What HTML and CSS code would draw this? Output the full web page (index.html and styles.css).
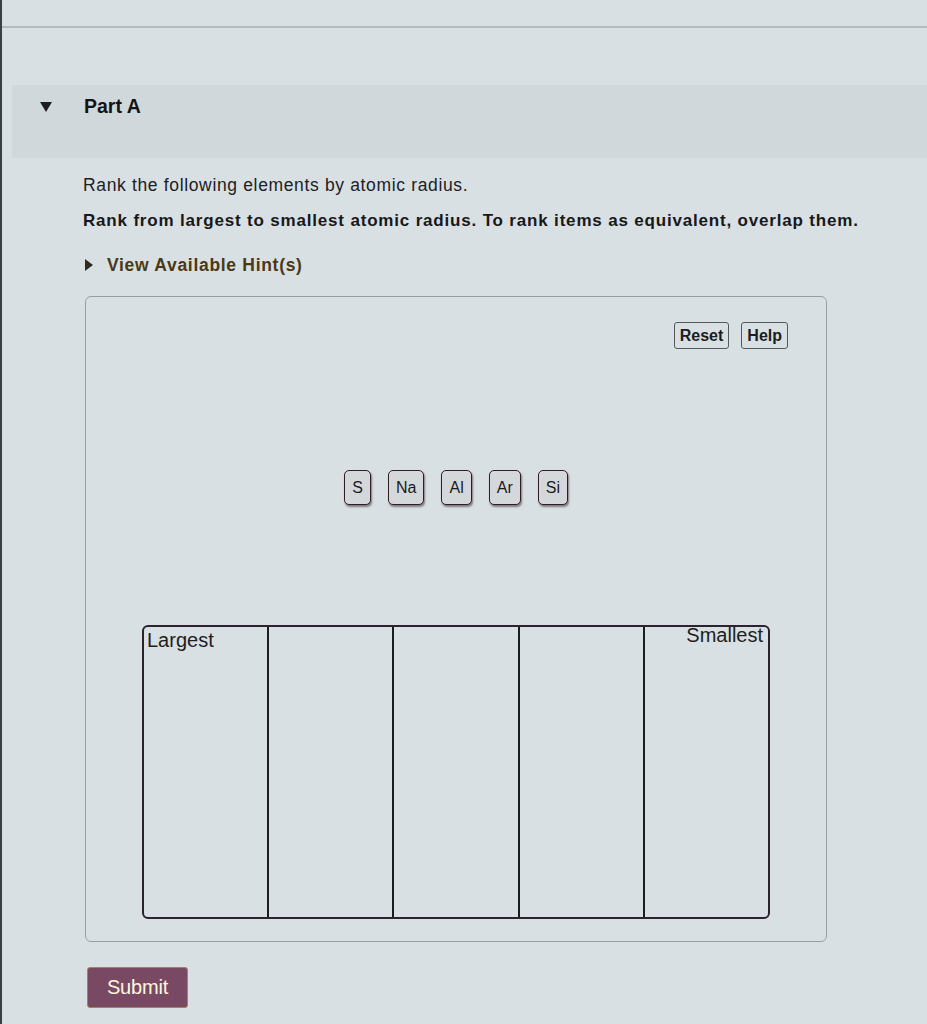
FILE: index.html
```html
<!DOCTYPE html>
<html>
<head>
<meta charset="utf-8">
<link rel="stylesheet" href="styles.css">
</head>
<body>
<div class="page">
  <div class="topbar"></div>
  <div class="part-header">
    <span class="caret-down"></span>
    <span class="part-title">Part A</span>
  </div>
  <div class="content">
    <p class="question">Rank the following elements by atomic radius.</p>
    <p class="instruction">Rank from largest to smallest atomic radius. To rank items as equivalent, overlap them.</p>
    <div class="hint"><span class="caret-right"></span><span class="hint-text">View Available Hint(s)</span></div>
    <div class="panel">
      <div class="tools">
        <button class="tool-btn">Reset</button>
        <button class="tool-btn">Help</button>
      </div>
      <div class="tiles">
        <div class="tile">S</div>
        <div class="tile">Na</div>
        <div class="tile">Al</div>
        <div class="tile">Ar</div>
        <div class="tile">Si</div>
      </div>
      <div class="ranking">
        <div class="slot"><span class="label-left">Largest</span></div>
        <div class="slot"></div>
        <div class="slot"></div>
        <div class="slot"></div>
        <div class="slot slot-last"><span class="label-right">Smallest</span></div>
      </div>
    </div>
    <button class="submit">Submit</button>
  </div>
</div>
</body>
</html>
```
FILE: styles.css
```css
html, body {
  margin: 0;
  padding: 0;
}
body {
  background: #d8e0e3;
  font-family: "Liberation Sans", Arial, sans-serif;
  color: #1c1c1e;
}
.page {
  width: 927px;
  height: 1024px;
  overflow: hidden;
  border-left: 2px solid #3c4044;
  box-sizing: border-box;
}
.topbar {
  height: 26px;
  border-bottom: 2px solid #b3bbc0;
}
.part-header {
  margin-top: 57px;
  margin-left: 10px;
  height: 73px;
  background: #d1d8dc;
  display: flex;
  align-items: flex-start;
  padding-top: 10px;
  box-sizing: border-box;
}
.caret-down {
  width: 0;
  height: 0;
  border-left: 6px solid transparent;
  border-right: 6px solid transparent;
  border-top: 10px solid #1e1e22;
  margin-left: 28px;
  margin-top: 7px;
}
.part-title {
  margin-left: 32px;
  font-size: 19.5px;
  line-height: 22px;
  font-weight: bold;
  letter-spacing: 0;
  color: #141416;
}
.content {
  padding-left: 81px;
}
.question {
  margin: 17px 0 0 0;
  font-size: 17.5px;
  line-height: 20px;
  letter-spacing: 0.65px;
  color: #202024;
}
.instruction {
  margin: 16px 0 0 0;
  font-size: 17px;
  line-height: 20px;
  letter-spacing: 0.82px;
  font-weight: bold;
  color: #18181a;
}
.hint {
  margin-top: 24px;
  display: flex;
  align-items: center;
  height: 20px;
}
.caret-right {
  width: 0;
  height: 0;
  border-top: 6px solid transparent;
  border-bottom: 6px solid transparent;
  border-left: 8px solid #2e2a20;
  margin-left: 2px;
}
.hint-text {
  margin-left: 14px;
  font-size: 17.5px;
  letter-spacing: 0.7px;
  font-weight: bold;
  color: #4a3914;
}
.panel {
  margin-top: 21px;
  margin-left: 2px;
  width: 742px;
  height: 646px;
  box-sizing: border-box;
  border: 1.5px solid #9a9fa3;
  border-radius: 6px;
  padding: 25px 38px 0 56px;
  display: flex;
  flex-direction: column;
}
.tools {
  display: flex;
  justify-content: flex-end;
  gap: 12px;
}
.tool-btn {
  font-family: "Liberation Sans", Arial, sans-serif;
  font-size: 16px;
  font-weight: bold;
  color: #1c1c1e;
  background: transparent;
  border: 1.5px solid #55585c;
  border-radius: 3px;
  height: 27px;
  padding: 0 5px;
}
.tiles {
  margin-top: 121px;
  margin-left: -56px;
  margin-right: -38px;
  display: flex;
  justify-content: center;
  gap: 17px;
}
.tile {
  min-width: 27px;
  height: 35px;
  padding: 0 7px;
  box-sizing: border-box;
  background: #d5d8da;
  border: 1.5px solid #2e1e26;
  border-radius: 5px;
  box-shadow: 1px 2px 2px rgba(40, 20, 30, 0.5);
  display: flex;
  align-items: center;
  justify-content: center;
  font-size: 16px;
  color: #1a1a1c;
}
.ranking {
  margin-top: 120px;
  width: 628px;
  height: 294px;
  box-sizing: border-box;
  border: 2px solid #2c2230;
  border-radius: 6px;
  display: flex;
}
.slot {
  flex: 1;
  border-right: 2px solid #1c1c20;
  position: relative;
}
.slot-last {
  border-right: none;
}
.label-left {
  position: absolute;
  left: 3px;
  top: 2px;
  font-size: 20px;
  color: #1e1e22;
}
.label-right {
  position: absolute;
  right: 5px;
  top: -3px;
  font-size: 20px;
  color: #1e1e22;
}
.submit {
  margin-top: 25px;
  margin-left: 4px;
  width: 101px;
  height: 41px;
  background: #794963;
  border: 1.5px solid #a08a48;
  border-radius: 3px;
  color: #fff6de;
  font-family: "Liberation Sans", Arial, sans-serif;
  font-size: 20px;
  letter-spacing: -0.2px;
}
```
